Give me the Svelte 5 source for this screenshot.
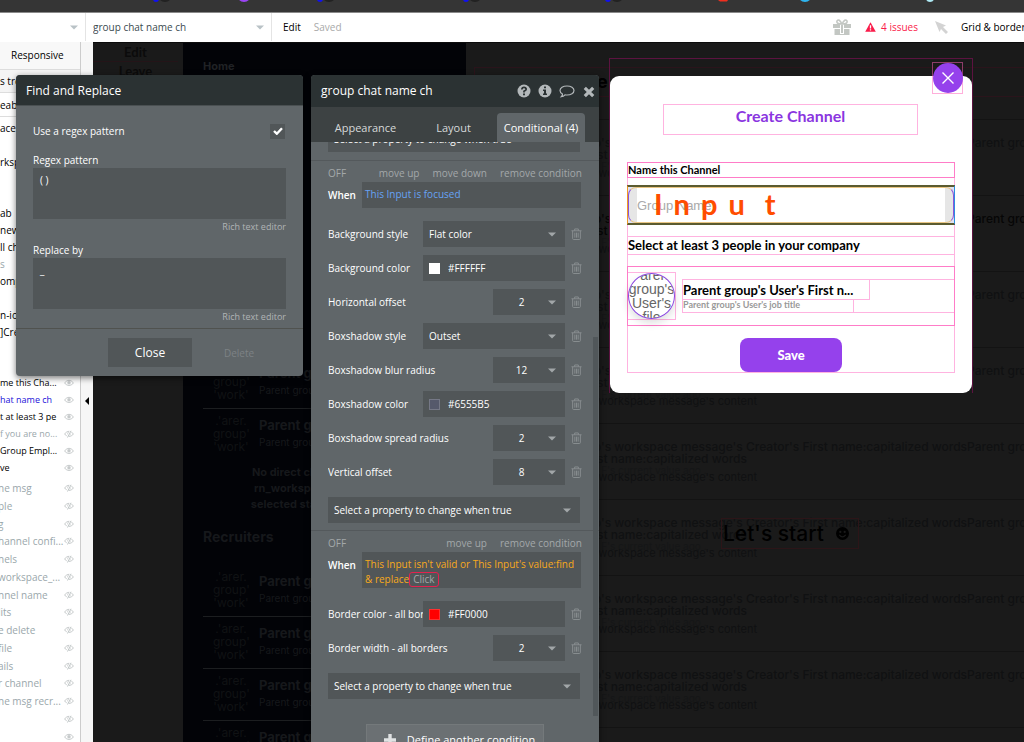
<script>
  const outline = [
    'ace', '', 'rksp', '', '', 'ab', 'new', 'll ch', '*s', 'omp', '', 'n-ios', ']Cre', '', '',
  ];
  const visibleLayers = [
    { text: 'me this Cha...', kind: 'on' },
    { text: 'hat name ch', kind: 'selected' },
    { text: 't at least 3 pe', kind: 'on' },
    { text: 'f you are no...', kind: 'off' },
    { text: 'Group Empl...', kind: 'on' },
    { text: 've', kind: 'on' },
  ];
  const hiddenLayers = [
    'ne msg', 'ple', 'g', 'hannel confi...', 'nels', 'workspace_...', 'nnel name', 'lits',
    'e delete', 'file', 'ails', 'r channel', 'ne msg recr...', '', '',
  ];
  const focusProps = [
    { label: 'Background style', type: 'select', value: 'Flat color' },
    { label: 'Background color', type: 'color', value: '#FFFFFF', swatch: '#ffffff' },
    { label: 'Horizontal offset', type: 'number', value: '2' },
    { label: 'Boxshadow style', type: 'select', value: 'Outset' },
    { label: 'Boxshadow blur radius', type: 'number', value: '12' },
    { label: 'Boxshadow color', type: 'color', value: '#6555B5', swatch: '#55596b' },
    { label: 'Boxshadow spread radius', type: 'number', value: '2' },
    { label: 'Vertical offset', type: 'number', value: '8' },
  ];
  const invalidProps = [
    { label: 'Border color - all borders', type: 'color', value: '#FF0000', swatch: '#ff0000' },
    { label: 'Border width - all borders', type: 'number', value: '2' },
  ];
  const messages = [0, 1, 2, 3, 4, 5, 6, 7];
  let regex = $state('( )');
  let replacement = $state('_');
  let useRegex = $state(true);
  let groupName = $state('');
</script>

{#snippet eye(off)}
  <svg class="eye" viewBox="0 0 10 8" aria-hidden="true">
    <path d="M.5 4Q5-1.500 9.500 4Q5 9 .5 4Z" fill="none" stroke="#c6cacb" stroke-width="1" />
    <circle cx="5" cy="3.700" r="1.700" fill="#c6cacb" />
    {#if off}<path d="M3 7.500 7 .5" stroke="#fff" stroke-width="2" /><path d="M3.500 7.500 7 .8" stroke="#b9bfc0" stroke-width=".9" />{/if}
  </svg>
{/snippet}

{#snippet trash()}
  <button class="trash" aria-label="Remove property">
    <svg viewBox="0 0 12 13" aria-hidden="true">
      <path d="M.5 3h11M4 3V1h4v2M1.800 3v8.500q0 1 1 1h6.400q1 0 1-1V3M4.200 5v5.500M6 5v5.500M7.800 5v5.500" fill="none" stroke="#8b9093" stroke-width="1" />
    </svg>
  </button>
{/snippet}

{#snippet caret()}
  <svg class="caret" viewBox="0 0 8 5" aria-hidden="true"><path d="M0 .5h8L4 4.500Z" fill="currentColor" /></svg>
{/snippet}

{#snippet propertyRow(p, id)}
  <div class="prop">
    <label for={id}>{p.label}</label>
    {#if p.type === 'color'}
      <div class="field wide">
        <span class="swatch" style="background:{p.swatch}"></span>
        <input {id} type="text" value={p.value} />
      </div>
    {:else}
      <div class="field" class:wide={p.type === 'select'} class:number={p.type === 'number'}>
        <select {id}><option>{p.value}</option></select>
        {@render caret()}
      </div>
    {/if}
    {@render trash()}
  </div>
{/snippet}

{#snippet addProperty()}
  <div class="field add">
    <select aria-label="Select a property to change when true"><option>Select a property to change when true</option></select>
    {@render caret()}
  </div>
{/snippet}

{#snippet person()}
  <div class="person">
    <span class="mini">.'arer.<br />group'<br />'work'</span>
    <div><strong>Parent group</strong><p>Parent group's</p></div>
  </div>
{/snippet}

<div class="app">
  <div class="strip">
    <svg viewBox="0 0 1024 12" preserveAspectRatio="xMinYMin slice" aria-hidden="true">
      {#each [156, 320, 466, 608] as x}
        <circle cx={x} cy="-1" r="3" fill="#1010f0" /><circle cx={x + 9} cy="-5" r="7" fill="#222" />
      {/each}
      <circle cx="244" cy="-5" r="7" fill="#9b45f5" />
      <path d="M718 0h10l-1 1.500h-7Z" fill="#f02e1e" />
      <circle cx="805" cy="-5" r="7" fill="#2fb4ee" />
      <circle cx="930" cy="-2" r="4" fill="#aeeaf5" />
    </svg>
  </div>

  <header class="toolbar">
    <div class="pick first">{@render caret()}</div>
    <div class="pick second">
      <select aria-label="Element"><option>group chat name ch</option></select>
      {@render caret()}
    </div>
    <button class="tool">Edit</button>
    <span class="saved">Saved</span>
    <span class="spacer"></span>
    <svg class="gift" viewBox="0 0 18 16" aria-hidden="true">
      <path d="M0 5h18v4H0ZM1.500 10h15v6h-15Z" fill="#c3c7c3" />
      <path d="M7 5h4v10H7Z" fill="#fff" /><path d="M8 6h2v8H8Z" fill="#c3c7c3" />
      <path d="M9 5Q3 5 4 2Q6-1 9 5Q12-1 14 2Q15 5 9 5" fill="none" stroke="#c3c7c3" stroke-width="1.500" />
    </svg>
    <button class="issues">
      <svg viewBox="0 0 11 10" aria-hidden="true"><path d="M5.500.3 10.800 9.700H.2Z" fill="#fa1b4a" /><path d="M5.500 3.200v3.300M5.500 7.300v1.300" stroke="#fff" stroke-width="1.300" /></svg>
      4 issues
    </button>
    <svg class="pointer" viewBox="0 0 13 13" aria-hidden="true"><path d="M0 0 11 4.500 8 6 13 11 11 13 6 8 4.500 11Z" fill="#d3d3d3" /></svg>
    <button class="tool grid">Grid &amp; borders</button>
  </header>

  <main>
    <aside>
      <div class="tab">Responsive</div>
      <div class="search">s tre</div>
      <div class="scope">eab</div>
      <ul class="tree upper">
        {#each outline as text}
          <li class:off={text.startsWith('*')}>{text.replace('*', '')}</li>
        {/each}
        {#each visibleLayers as l}
          <li class={l.kind}><span>{l.text}</span>{@render eye(l.kind === 'off')}</li>
        {/each}
      </ul>
      <ul class="tree lower">
        {#each hiddenLayers as text, i}
          <li class="off"><span>{text}</span>{@render eye(i < hiddenLayers.length - 1)}</li>
        {/each}
      </ul>
    </aside>
    <div class="gutter">
      <svg viewBox="0 0 4 8" aria-hidden="true"><path d="M4 0v8L0 4Z" fill="#000" /></svg>
    </div>

    <section class="canvas">
      <div class="menu-col"><p>Edit</p><p>Leave</p></div>
      <nav>
        <h3>Home</h3>
        <div class="people">
          {@render person()}
          {@render person()}
        </div>
        <p class="none">No direct chats with<br />rn_workspace user<br />selected start a chat</p>
        <h2>Recruiters</h2>
        <div class="people">
          {#each [0, 1, 2, 3] as n}{@render person()}{/each}
        </div>
      </nav>
      <div class="feed">
        <div class="feed-head"><h3>e</h3></div>
        {#each messages as m}
          <article class:strong={m === 1}>
            <b>Parent group's workspace message's Creator's First name:capitalized wordsParent group's</b>
            <b>Creator's Last name:capitalized words</b>
            <small>F's current value ago . _</small>
            <p>Parent group's workspace message's content</p>
          </article>
        {/each}
        <div class="start">Let's start
          <svg viewBox="0 0 12 12" aria-hidden="true"><circle cx="6" cy="6" r="6" fill="#000" /><circle cx="4" cy="4.500" r="1" fill="#1a1a1a" /><circle cx="8" cy="4.500" r="1" fill="#1a1a1a" /><path d="M3 7.300Q6 11 9 7.300" fill="none" stroke="#1a1a1a" /></svg>
        </div>
      </div>
    </section>
  </main>

  <section class="window find" aria-label="Find and Replace">
    <h1>Find and Replace</h1>
    <div class="find-body">
      <div class="check-row">
        <label for="use-regex">Use a regex pattern</label>
        <span class="check">
          <input id="use-regex" type="checkbox" bind:checked={useRegex} />
          {#if useRegex}<svg viewBox="0 0 10 8" aria-hidden="true"><path d="M1 4 3.800 6.700 9 1.200" fill="none" stroke="#fff" stroke-width="2.400" /></svg>{/if}
        </span>
      </div>
      <label for="regex">Regex pattern</label>
      <textarea id="regex" bind:value={regex}></textarea>
      <a href="#rich-regex">Rich text editor</a>
      <label for="replace">Replace by</label>
      <textarea id="replace" bind:value={replacement}></textarea>
      <a href="#rich-replace">Rich text editor</a>
    </div>
    <footer><span></span><button class="close">Close</button><button class="delete" disabled>Delete</button></footer>
  </section>

  <section class="window editor" aria-label="Property editor">
    <div class="editor-head">
      <h1>group chat name ch</h1>
      <button aria-label="Help"><svg viewBox="0 0 14 14"><circle cx="7" cy="7" r="6.500" fill="#b3b8ba" /><path d="M4.800 5.500Q5 3.300 7 3.300T9.200 5.200Q9.200 6.200 7 7.300V8.500" fill="none" stroke="#2b3233" stroke-width="1.700" /><path d="M6 9.500h2v1.700H6Z" fill="#2b3233" /></svg></button>
      <button aria-label="Info"><svg viewBox="0 0 14 14"><circle cx="7" cy="7" r="6.500" fill="#b3b8ba" /><path d="M6 2.500h2v1.800H6ZM5 5.500h3v4h1v1.500H5V9.500h1V7H5Z" fill="#2b3233" /></svg></button>
      <button aria-label="Comment" class="big"><svg viewBox="0 0 16 14"><path d="M8 2C12 2 15 4 15 6.500S12 11 8 11Q7 11 6 10.800Q4.500 12.500 2.300 12.700Q3.500 11.500 3.500 10Q1 8.700 1 6.500C1 4 4 2 8 2Z" fill="none" stroke="#b3b8ba" stroke-width="1.200" /></svg></button>
      <button aria-label="Close editor"><svg viewBox="0 0 14 14"><path d="m2.800 3.800 8.400 8.400m0-8.400-8.400 8.400" stroke="#b3b8ba" stroke-width="3.200" /></svg></button>
    </div>
    <div class="tabs">
      <button class="t1">Appearance</button><button class="t2">Layout</button><button class="active">Conditional (4)</button>
    </div>
    <div class="scroll">
      <div class="cut">{@render addProperty()}</div>
      <div class="condition">
        <div class="actions"><span>OFF</span><button>move up</button><button>move down</button><button>remove condition</button></div>
        <div class="when"><b>When</b><div class="expr blue">This Input is focused</div></div>
        <div class="props">
          {#each focusProps as p, i}{@render propertyRow(p, 'focus-' + i)}{/each}
        </div>
        {@render addProperty()}
      </div>
      <div class="condition">
        <div class="actions"><span>OFF</span><button>move up</button><button>remove condition</button></div>
        <div class="when"><b>When</b><div class="expr amber">This Input isn't valid or This Input's value:find &amp; replace<button>Click</button></div></div>
        <div class="props">
          {#each invalidProps as p, i}{@render propertyRow(p, 'invalid-' + i)}{/each}
        </div>
        {@render addProperty()}
      </div>
      <span class="thumb"></span>
    </div>
    <div class="define">
      <button><svg viewBox="0 0 12 12" aria-hidden="true"><path d="M6 0v12M0 6h12" stroke="#e0e2e3" stroke-width="3.400" /></svg>Define another condition</button>
    </div>
  </section>

  <section class="popup-frame" aria-label="Create Channel">
    <button class="dismiss" aria-label="Close popup"><span><svg viewBox="0 0 14 14" aria-hidden="true"><path d="m1.500 1.500 11 11m0-11-11 11" stroke="#fff" stroke-width="1.400" /></svg></span></button>
    <div class="popup">
      <h2>Create Channel</h2>
      <form onsubmit={(e) => e.preventDefault()}>
        <label class="name" for="group-name">Name this Channel</label>
        <div class="group-input">
          <input id="group-name" type="text" placeholder="Group Name" bind:value={groupName} />
          <div class="scribble"><span>I</span><span>n</span><span>p</span><span>u</span><span class="wide-t">t</span></div>
        </div>
        <p class="select">Select at least 3 people in your company</p>
        <div class="user">
          <div class="pic"><span>Parent group's User's file</span></div>
          <div class="who"><strong>Parent group's User's First n...</strong><small>Parent group's User's job title</small></div>
        </div>
        <button class="save">Save</button>
      </form>
    </div>
  </section>
</div>

<style>
  :global(body) { margin: 0; }
  .app, .app * { box-sizing: border-box; }
  .app { position: relative; display: flex; flex-direction: column; height: 100vh; overflow: hidden; font: 10px/16px "Open Sans", sans-serif; color: #000; background: #fff; }
  button, input, select, textarea { font: inherit; color: inherit; border: 0; padding: 0; margin: 0; background: none; border-radius: 0; }
  select { appearance: none; }
  p, h1, h2, h3, ul { margin: 0; padding: 0; }
  svg { display: block; flex: none; }
  .caret { width: 8px; height: 5px; pointer-events: none; color: #a2a6a8; }

  .strip { height: 13px; background: #353535; border-bottom: 1px solid #8a8a8a; overflow: hidden; }
  .strip svg { width: 100%; height: 12px; }
  .toolbar { display: flex; align-items: center; height: 29px; padding-bottom: 1px; background: #fff; white-space: nowrap; overflow: hidden; }
  .pick { display: flex; align-items: center; height: 100%; border-right: 1px solid #e4e4e4; padding-right: 7px; }
  .pick .caret { color: #b9c2c6; }
  .first { width: 86px; justify-content: flex-end; }
  .second { width: 186px; padding-left: 7px; color: #3b4a50; }
  .second select { flex: 1; }
  .tool { margin-left: 11px; }
  .saved { margin-left: 13px; color: #a9a9a9; }
  .spacer { flex: 1; }
  .gift { width: 18px; height: 16px; margin-right: 14px; }
  .issues { display: flex; align-items: center; gap: 5px; color: #fa1b4a; margin-right: 17px; }
  .issues svg { width: 11px; height: 10px; }
  .pointer { width: 13px; height: 13px; }
  .grid { margin-left: 13px; width: 63px; overflow: hidden; text-align: left; }

  main { flex: 1; min-height: 0; display: flex; }
  aside { width: 81px; border-right: 1px solid #ccc; overflow: hidden; white-space: nowrap; }
  .tab { height: 28px; line-height: 27px; padding-left: 11px; background: #f8f8f8; border-bottom: 1px solid #ddd; }
  .search { height: 23px; line-height: 22px; background: #f4f4f4; border-bottom: 1px solid #ddd; }
  .scope { height: 24px; line-height: 24px; border-bottom: 1px solid #ddd; margin-bottom: 2px; }
  .tree { list-style: none; display: grid; }
  .upper { grid-auto-rows: 17px; margin-bottom: 3px; }
  .upper span { font-size: 9px; }
  .lower { grid-auto-rows: 18px 18px 17px 18px; }
  .lower span { margin-left: -2px; }
  .tree li { display: flex; align-items: center; justify-content: space-between; padding-right: 6px; }
  .off { color: #9aa7ab; }
  .selected { color: #1a12d8; }
  .eye { width: 10px; height: 8px; }
  .gutter { width: 12px; background: #f6f6f6; padding: 355px 0 0 4px; }
  .gutter svg { width: 4px; height: 8px; }

  .canvas { flex: 1; min-width: 0; display: flex; background: #1a1a1a; overflow: hidden; font-family: "Inter", sans-serif; border-top: 1px solid #0c0c0c; }
  .menu-col { width: 90px; padding-right: 5px; text-align: center; font: 700 13px/18px "Lato", sans-serif; color: #0b0b0b; }
  .menu-col p { border-bottom: 1px solid #241418; }
  nav { width: 283px; background: #020307; color: #16181b; overflow: hidden; padding: 14px 0 0 20px; white-space: nowrap; }
  nav h3 { font-size: 11px; line-height: 18px; color: #202225; }
  nav h3 + .people { margin-top: 282px; }
  .person { display: flex; align-items: center; height: 52px; padding: 0 0 4px 10px; gap: 10px; border-bottom: 1px solid #1c1e20; overflow: hidden; }
  .person p { font-size: 10px; }
  .person strong { font-size: 13px; line-height: 18px; }
  .mini { width: 36px; font-size: 12px; line-height: 13px; text-align: center; color: #101214; overflow: hidden; height: 38px; }
  nav h3 + .people .person:last-child { border: 0; }
  .none { text-align: center; font-size: 11px; line-height: 16px; font-weight: 700; margin-top: 3px; padding-right: 58px; }
  nav h2 { font-size: 14px; line-height: 20px; margin: 15px 0 18px; }
  .feed { position: relative; flex: 1; min-width: 0; overflow: hidden; color: #101112; }
  .feed-head { height: 77px; padding: 24px 0 0 8px; border-bottom: 1px solid #131313; }
  .feed-head h3 { border: 1px solid #2a141b; border-right: 0; padding-left: 122px; font-size: 18px; line-height: 28px; color: #000; }
  article { height: 76px; border-bottom: 1px solid #131313; padding: 17px 0 0 61px; white-space: nowrap; line-height: 12px; }
  article b { display: block; font-weight: 500; font-size: 12px; }
  article small { display: block; margin-left: 74px; font-size: 10px; line-height: 10px; color: #151617; }
  article p { font-size: 11px; line-height: 16px; margin: -6px 0 0 -8px; }
  article.strong b { color: #060606; }
  .start { position: absolute; left: 255px; top: 475px; height: 31px; padding: 0 9px 0 1px; border: 1px solid #2c1518; display: flex; align-items: center; gap: 12px; font-size: 21px; font-weight: 500; color: #000; }
  .start svg { width: 13px; height: 13px; }

  .window { position: absolute; top: 75px; color: #fff; background: #606669; border-radius: 4px; overflow: hidden; box-shadow: 0 2px 6px #0008; font-weight: 500; }
  .window h1 { font-size: 12px; font-weight: 500; }
  .find { left: 16px; width: 287px; }
  .find h1 { height: 31px; line-height: 32px; padding-left: 10px; background: #2b3233; border-bottom: 1px solid #4a5052; }
  .find-body { display: flex; flex-direction: column; padding: 16px 17px 4px; }
  .check-row { display: flex; justify-content: space-between; align-items: center; height: 18px; margin-bottom: 12px; }
  .check { display: grid; place-items: center; width: 15px; height: 15px; margin-right: 1px; background: #515658; }
  .check > * { grid-area: 1 / 1; }
  .check input { appearance: none; width: 15px; height: 15px; }
  .check svg { width: 10px; height: 8px; pointer-events: none; }
  textarea { height: 51px; background: #515658; resize: none; padding: 4px 7px; outline: 0; display: block; }
  .find a { align-self: flex-end; color: #b0b4b6; text-decoration: none; font-weight: 400; font-size: 9px; line-height: 15px; margin-bottom: 8px; }
  .find a:last-child { margin-bottom: 0; }
  .find footer { display: grid; grid-template-columns: 75px 84px 94px; padding: 9px 17px; border-top: 1px solid #50524f; }
  .close { height: 29px; background: #515658; font-size: 12px; }
  .delete { color: #7d8285; }

  .editor { left: 311px; width: 288px; bottom: -40px; display: flex; flex-direction: column; }
  .editor-head { display: flex; align-items: center; height: 32px; padding: 0 3px 0 10px; background: #2b3233; gap: 7px; }
  .editor-head h1 { flex: 1; }
  .editor-head svg { width: 14px; height: 14px; }
  .editor-head .big svg { width: 16px; }
  .tabs { display: flex; height: 35px; padding: 6px 14px 0 17px; background: #3d4243; color: #d6d9da; font-size: 11px; }
  .tabs button { height: 29px; font-weight: 500; }
  .tabs .t1 { width: 75px; }
  .tabs .t2 { width: 94px; padding-left: 7px; }
  .tabs .active { width: 88px; background: #606669; color: #fff; border-radius: 4px 4px 0 0; }
  .scroll { position: relative; height: 574px; overflow: hidden; }
  .cut { height: 19px; padding: 0 19px 8px 17px; display: flex; flex-direction: column; justify-content: flex-end; border-bottom: 1px solid #54595c; }
  .condition { padding: 3px 18px 7px 17px; border-bottom: 1px solid #54595c; }
  .condition:nth-child(3) { padding-bottom: 17px; }
  .actions { display: flex; gap: 13px; height: 18px; align-items: center; color: #a3a8aa; margin-right: -1px; }
  .actions span { flex: 1; }
  .when { display: grid; grid-template-columns: 34px 1fr; margin-bottom: 13px; }
  .when b { font-weight: 600; line-height: 26px; }
  .expr { min-height: 26px; background: #515658; padding: 5px 3px; line-height: 15px; }
  .amber { padding: 5px 3px 1px; color: #f7a91c; }
  .blue { color: #66a3f5; }
  .expr button { border: 1px solid #e5214f; border-radius: 3px; color: #a3a8aa; padding: 0 3px; line-height: 13px; height: 15px; }
  .props { display: grid; grid-template-columns: minmax(0, 1fr); gap: 8px; margin-bottom: 12px; }
  .prop { display: flex; align-items: center; height: 26px; white-space: nowrap; margin-right: -1px; }
  .prop label { flex: 1; min-width: 0; overflow: hidden; }
  .field { display: flex; align-items: center; height: 26px; background: #515658; padding: 0 9px 0 6px; flex: none; }
  .field select, .field input { flex: 1; min-width: 0; height: 100%; outline: 0; }
  .wide { width: 142px; }
  .number { width: 72px; padding-left: 2px; }
  .number select { text-align: center; text-align-last: center; }
  .add { margin-right: 1px; }
  .cut .add { margin: 0; }
  .swatch { width: 11px; height: 11px; border: 1px solid #ffffff30; margin-right: 8px; }
  .trash { width: 11px; margin-left: 6px; }
  .trash svg { width: 11px; height: 12px; }
  .thumb { position: absolute; right: 1px; top: 195px; bottom: 0; width: 5px; background: #51575a; }
  .define { padding: 8px 55px; }
  .define button { display: flex; align-items: center; justify-content: center; gap: 11px; width: 100%; height: 32px; padding-left: 9px; background: #6b7073; border: 1px solid #74797b; font-size: 11px; }
  .define svg { width: 12px; height: 12px; }

  .popup-frame { position: absolute; left: 609px; top: 58px; width: 364px; padding-top: 17px; border: 1px solid #5c1340; border-bottom: 0; font-family: "Lato", sans-serif; font-size: 11px; }
  .dismiss { position: absolute; right: 9px; top: 3px; width: 31px; height: 32px; border: 1px solid #ff5fb880; display: grid; place-items: center; }
  .dismiss span { display: grid; place-items: center; width: 30px; height: 30px; border-radius: 50%; background: #9541ec; }
  .dismiss svg { width: 14px; height: 14px; }
  .popup { background: #fff; border-radius: 9px; padding: 28px 17px 20px; }
  .popup h2 { margin: 0 37px 27px 36px; height: 31px; border: 1px solid #ffb3e0; text-align: center; color: #8a35e0; font-size: 16px; line-height: 22px; }
  form { border: 1px solid #ffb3e0; border-top: 0; display: flex; flex-direction: column; }
  .name { height: 16px; margin: 0 -1px 7px; border: 1px solid #ff7cc8; font-weight: 700; line-height: 13px; }
  .group-input { position: relative; margin: 0 -1px 11px; height: 40px; background: #dfe2f2; border: 1px solid #2b8fe0; border-top: 2px solid #5b5b30; border-bottom: 2px solid #5b5b30; border-left-color: #f29a1f; }
  .group-input input { display: block; width: 100%; height: 36px; border: 1px solid #8d55d8; border-top-color: #e9c583; border-bottom-color: #e9c583; border-radius: 8px; padding: 0 8px; background: linear-gradient(90deg, #e6e6e6 8px, #fff 8px calc(100% - 8px), #e6e6e6 calc(100% - 8px)); font: 13px "Liberation Sans", sans-serif; outline: 0; }
  .group-input input::placeholder { color: #aaa; }
  .scribble { position: absolute; left: 26px; top: 0; display: flex; gap: 11px; align-items: center; color: #ff4d00; font: 700 29px/34px "Lato", sans-serif; pointer-events: none; }
  .wide-t { padding-left: 9px; }
  .select { height: 19px; margin: 0 -1px 11px; border: 1px solid #ffb3e0; font-weight: 700; font-size: 13px; line-height: 16px; }
  .user { display: flex; height: 60px; margin: 0 -1px 12px; border: 1px solid #ff7cc8; padding: 5px 0; gap: 6px; }
  .pic { width: 48px; height: 48px; border: 1px solid #ffb3e0; border-left: 0; }
  .pic span { display: flex; align-items: center; justify-content: center; width: 47px; height: 46px; border: 1px solid #8a45e0; border-radius: 50%; overflow: hidden; text-align: center; font: 14px/14px "Liberation Sans", sans-serif; color: #666; box-shadow: 0 4px 8px #0002; }
  .who { flex: 1; margin-top: 7px; height: 34px; border: 1px solid #ffb3e0; border-right: 0; display: flex; flex-direction: column; align-items: flex-start; }
  .who strong { width: 187px; height: 20px; border: 1px solid #ffb3e0; border-top: 0; border-left: 0; font-size: 13px; line-height: 20px; white-space: nowrap; }
  .who small { width: 171px; height: 13px; border-right: 1px solid #ffb3e0; font-size: 9px; line-height: 10px; font-weight: 700; color: #999; }
  .save { align-self: center; width: 102px; height: 34px; border-radius: 8px; background: #9541ec; color: #fff; font-size: 13px; font-weight: 900; }
</style>
